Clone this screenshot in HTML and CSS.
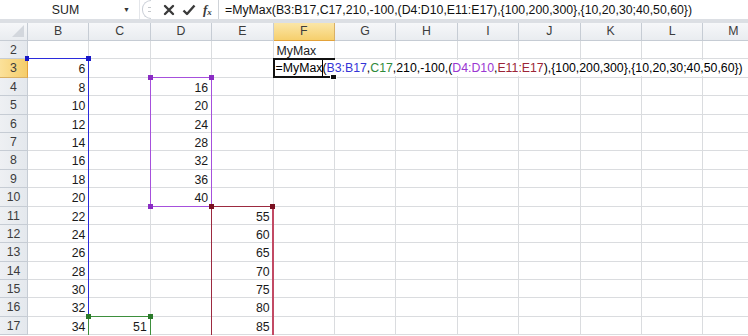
FILE: index.html
```html
<!DOCTYPE html>
<html lang="en">
<head>
  <meta charset="UTF-8">
  <title>MyMax</title>
  <link rel="stylesheet" href="styles.css">
</head>
<body>
  <div class="formula-bar">
    <div class="name-box">
      <span class="name">SUM</span>
      <span class="drop">&#9660;</span>
    </div>
    <div class="grip"><span></span></div>
    <div class="fb-buttons">
      <svg class="ic" width="12" height="12" viewBox="0 0 12 12"><path d="M2 2 L10 10 M10 2 L2 10" stroke="#3a3a3a" stroke-width="2.4" stroke-linecap="round"/></svg>
      <svg class="ic" width="14" height="12" viewBox="0 0 14 12"><path d="M1.5 6.5 L5 10 L12.5 1.5" fill="none" stroke="#3a3a3a" stroke-width="2.4" stroke-linejoin="round"/></svg>
      <span class="fx">f<sub>x</sub></span>
    </div>
    <div class="formula">=MyMax(B3:B17,C17,210,-100,(D4:D10,E11:E17),{100,200,300},{10,20,30;40,50,60})</div>
  </div>

  <div class="sheet-wrap">
    <div class="sheet" id="sheet"></div>
    <div class="overlay">
      <div class="ref ref-blue">
        <span class="h tl"></span><span class="h tr"></span><span class="h bl"></span><span class="h br"></span>
      </div>
      <div class="ref ref-green">
        <span class="h tl"></span><span class="h tr"></span><span class="h bl"></span><span class="h br"></span>
      </div>
      <div class="ref ref-purple">
        <span class="h tl"></span><span class="h tr"></span><span class="h bl"></span><span class="h br"></span>
      </div>
      <div class="ref ref-red">
        <span class="h tl"></span><span class="h tr"></span><span class="h bl"></span><span class="h br"></span>
      </div>
      <div class="editor">
        <span class="edit-text">=MyMax<span class="caret"></span>(<span class="c-blue">B3:B17</span>,<span class="c-green">C17</span>,210,-100,(<span class="c-purple">D4:D10</span>,<span class="c-red">E11:E17</span>),{100,200,300},{10,20,30;40,50,60})</span>
        <span class="fill-handle"></span>
      </div>
    </div>
  </div>

  <script>
    const cols = ["B", "C", "D", "E", "F", "G", "H", "I", "J", "K", "L", "M"];
    const values = { C17: 51, F2: "MyMax" };
    for (let r = 3; r <= 17; r++) values["B" + r] = 6 + (r - 3) * 2;
    for (let r = 4; r <= 10; r++) values["D" + r] = 16 + (r - 4) * 4;
    for (let r = 11; r <= 17; r++) values["E" + r] = 55 + (r - 11) * 5;

    const sheet = document.getElementById("sheet");

    function add(cls, text) {
      const div = document.createElement("div");
      div.className = cls;
      if (text !== undefined) div.textContent = text;
      sheet.appendChild(div);
    }

    add("corner");
    cols.forEach(c => add(c === "F" ? "col-head active" : "col-head", c));
    for (let r = 2; r <= 17; r++) {
      add(r === 3 ? "row-head active" : "row-head", r);
      cols.forEach(c => {
        const v = values[c + r];
        if (v === undefined) add("cell");
        else add(typeof v === "number" ? "cell num" : "cell", v);
      });
    }
  </script>
</body>
</html>
```

FILE: styles.css
```css
body {
  margin: 0;
  width: 748px;
  height: 336px;
  overflow: hidden;
  background: #fff;
  font-family: "Liberation Sans", Arial, sans-serif;
  font-size: 12.3px;
  color: #000;
}
.formula-bar {
  display: flex;
  align-items: center;
  height: 19px;
  border-bottom: 4px solid #dcdfe4;
}
.name-box {
  display: flex;
  align-items: center;
  width: 140px;
  height: 19px;
  box-sizing: border-box;
  border-right: 1px solid #e4e6ea;
}
.name {
  flex: 1;
  text-align: center;
  padding-left: 8px;
  color: #1e1e1e;
}
.drop {
  font-size: 7px;
  color: #333;
  width: 16px;
}
.grip {
  width: 8px;
  height: 17px;
  margin-left: 2px;
  border: 1px solid #c9ced6;
  border-right: none;
  border-radius: 9px 0 0 9px;
  display: flex;
  align-items: center;
  justify-content: center;
}
.grip span {
  width: 3px;
  height: 3px;
  border-top: 1px solid #c4c8cc;
  border-bottom: 1px solid #c4c8cc;
  margin-left: 4px;
}
.fb-buttons {
  display: flex;
  align-items: center;
  gap: 7px;
  padding-left: 12px;
  width: 55px;
  height: 19px;
  border-right: 1px solid #cfd3d8;
}
.fx {
  font-family: "Liberation Serif", serif;
  font-style: italic;
  font-weight: bold;
  font-size: 13px;
  color: #3a3a3a;
}
.fx sub {
  font-size: 9px;
  vertical-align: -1px;
}
.formula {
  padding-left: 6px;
  white-space: nowrap;
  color: #111;
}

.sheet-wrap {
  display: grid;
}
.sheet, .overlay {
  grid-area: 1 / 1;
  display: grid;
  grid-template-columns: 28px repeat(12, 61.4px);
  grid-template-rows: 18px repeat(16, 18.4px);
}
.overlay {
  pointer-events: none;
}
.corner, .col-head, .row-head {
  background: linear-gradient(#f6f7f9, #e9ecf0);
  border-right: 1px solid #c6ccd4;
  border-bottom: 1px solid #c6ccd4;
  box-sizing: border-box;
  color: #3c3c3c;
  text-align: center;
}
.corner {
  position: relative;
}
.corner::after {
  content: "";
  position: absolute;
  right: 3px;
  bottom: 3px;
  border-left: 12px solid transparent;
  border-bottom: 12px solid #d3d7dd;
}
.col-head {
  line-height: 17px;
}
.row-head {
  line-height: 19px;
  background: linear-gradient(90deg, #eef0f3, #e4e8ed);
}
.col-head.active {
  background: linear-gradient(#fbe6a8, #f6cf6c);
  border-bottom: 1px solid #e3a23a;
  border-right-color: #d9b065;
}
.row-head.active {
  background: linear-gradient(90deg, #fbe19a, #f5cd6a);
  border-right: 1px solid #e3a23a;
  border-bottom-color: #d9b065;
}
.cell {
  border-right: 1px solid #dadcdf;
  border-bottom: 1px solid #dadcdf;
  box-sizing: border-box;
  line-height: 20px;
  padding: 0 3px;
  white-space: nowrap;
  color: #1a1a1a;
}
.cell.num {
  text-align: right;
}

.ref {
  position: relative;
  box-sizing: border-box;
  margin: -1px 0 0 -1px;
}
.ref-blue {
  grid-column: 2 / 3;
  grid-row: 3 / 18;
  border: 1px solid #2b2bdc;
  border-left: none;
  border-bottom: none;
  --hc: #1818c8;
}
.ref-green {
  grid-column: 3 / 4;
  grid-row: 17 / 18;
  border: 1px solid #3d8f3d;
  border-bottom: none;
  --hc: #2a7a2a;
}
.ref-purple {
  grid-column: 4 / 5;
  grid-row: 4 / 11;
  border: 1px solid #a650dc;
  --hc: #8a2cc4;
}
.ref-red {
  grid-column: 5 / 6;
  grid-row: 11 / 18;
  border: 1px solid #9c2a40;
  border-right: 2px solid #c24a64;
  border-bottom: none;
  --hc: #7a1020;
}
.h {
  position: absolute;
  width: 5px;
  height: 5px;
  background: var(--hc);
}
.tl { left: -3px; top: -3px; }
.tr { right: -3px; top: -3px; }
.bl { left: -3px; bottom: -3px; }
.br { right: -3px; bottom: -3px; }
.ref-blue .bl, .ref-blue .br, .ref-green .bl, .ref-green .br, .ref-red .bl, .ref-red .br {
  bottom: -6px;
}
.ref-blue .tl, .ref-blue .bl {
  left: -2px;
  width: 4px;
}

.editor {
  grid-column: 6 / 7;
  grid-row: 3 / 4;
  position: relative;
  box-sizing: border-box;
  margin: -1px 0 0 -1px;
  border: 2px solid #111;
}
.edit-text {
  position: absolute;
  left: 1px;
  top: 0;
  height: 16px;
  line-height: 17px;
  white-space: nowrap;
  background: #fff;
  padding-right: 4px;
}
.caret {
  display: inline-block;
  width: 0;
  height: 17px;
  border-left: 1px solid #000;
  vertical-align: top;
  margin-right: -1px;
}
.c-blue { color: #3434d6; }
.c-green { color: #2f8a3a; }
.c-purple { color: #9a36d2; }
.c-red { color: #9c2436; }
.fill-handle {
  position: absolute;
  right: -4px;
  bottom: -4px;
  width: 5px;
  height: 4px;
  background: #111;
  border: 1px solid #fff;
}
```
